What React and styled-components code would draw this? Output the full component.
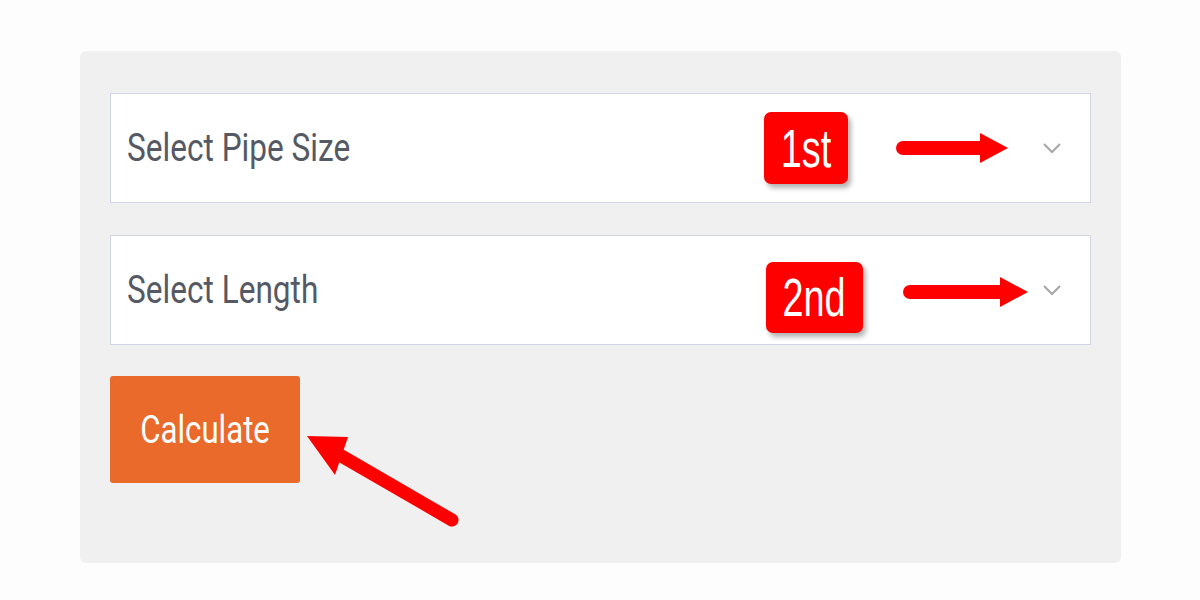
import React from "react";
import styled, { createGlobalStyle } from "styled-components";

const Global = createGlobalStyle`
  body {
    margin: 0;
    background: #fdfdfd;
    font-family: Roboto, "Liberation Sans", sans-serif;
  }
`;

const Page = styled.div`
  width: 1200px;
  height: 600px;
  padding: 51px 0 0 80px;
  box-sizing: border-box;
`;

const Panel = styled.div`
  width: 1041px;
  height: 512px;
  box-sizing: border-box;
  background: #f0f0f0;
  border-radius: 6px;
  padding: 42px 30px 0 30px;
  display: flex;
  flex-direction: column;
  gap: 32px;
`;

const Select = styled.div`
  height: 110px;
  box-sizing: border-box;
  background: #fff;
  border: 1px solid #d1d5e6;
  display: flex;
  align-items: center;
  padding: 0 29px 0 16px;
`;

const Label = styled.span`
  flex: 1;
  color: #545964;
  font-size: 39px;
  transform: scaleX(0.81);
  transform-origin: left center;
  white-space: nowrap;
`;

const Condensed = styled.span`
  display: inline-block;
  transform: scaleX(${(p) => p.$sx});
`;

const Badge = styled.div`
  width: ${(p) => p.$w}px;
  height: ${(p) => p.$h}px;
  margin-top: ${(p) => p.$dy}px;
  background: #ff0000;
  color: #fff;
  border-radius: 7px;
  box-shadow: 3px 4px 5px rgba(0, 0, 0, 0.3);
  display: flex;
  align-items: center;
  justify-content: center;
  font-family: "Liberation Sans", Arial, sans-serif;
  font-size: 54px;
`;

const ArrowSvg = styled.svg`
  margin-left: ${(p) => p.$gap}px;
  margin-top: ${(p) => p.$dy}px;
  flex: none;
`;

const Chevron = styled.svg`
  margin-left: ${(p) => p.$gap}px;
  flex: none;
`;

const ButtonWrap = styled.div`
  position: relative;
  margin-top: -1px;
`;

const Button = styled.button`
  width: 190px;
  height: 107px;
  border: none;
  border-radius: 3px;
  background: #ea6a2b;
  color: #fff;
  font-family: inherit;
  font-size: 39px;
  padding: 0;
`;

const CalcArrow = styled.svg`
  position: absolute;
  left: 190px;
  top: 50px;
`;

function HArrow({ width, gap, dy }) {
  const h = 34;
  const head = 28;
  return (
    <ArrowSvg $gap={gap} $dy={dy} width={width} height={h}>
      <line x1="7" y1={h / 2} x2={width - head + 2} y2={h / 2} stroke="#ff0000" strokeWidth="14" strokeLinecap="round" />
      <polygon points={`${width - head},2 ${width},${h / 2} ${width - head},${h - 2}`} fill="#ff0000" />
    </ArrowSvg>
  );
}

function Dropdown({ label, badge }) {
  return (
    <Select>
      <Label>{label}</Label>
      <Badge $w={badge.w} $h={badge.h} $dy={badge.dy}>
        <Condensed $sx={0.7}>{badge.text}</Condensed>
      </Badge>
      <HArrow width={badge.arrowW} gap={badge.arrowGap} dy={badge.arrowDy} />
      <Chevron $gap={badge.chevGap} width="18" height="11" viewBox="0 0 18 11">
        <polyline points="1,1 9,9 17,1" fill="none" stroke="#a6a6a6" strokeWidth="2" />
      </Chevron>
    </Select>
  );
}

export default function App() {
  return (
    <>
      <Global />
      <Page>
        <Panel>
          <Dropdown
            label="Select Pipe Size"
            badge={{ text: "1st", w: 84, h: 72, dy: 0, arrowW: 112, arrowGap: 48, arrowDy: 0, chevGap: 35 }}
          />
          <Dropdown
            label="Select Length"
            badge={{ text: "2nd", w: 97, h: 71, dy: 14, arrowW: 125, arrowGap: 40, arrowDy: 4, chevGap: 15 }}
          />
          <ButtonWrap>
            <Button>
              <Condensed $sx={0.8}>Calculate</Condensed>
            </Button>
            <CalcArrow width="170" height="110">
              <line x1="38" y1="28" x2="152" y2="94" stroke="#ff0000" strokeWidth="13" strokeLinecap="round" />
              <polygon points="7,10 48,11 35,49" fill="#ff0000" />
            </CalcArrow>
          </ButtonWrap>
        </Panel>
      </Page>
    </>
  );
}
